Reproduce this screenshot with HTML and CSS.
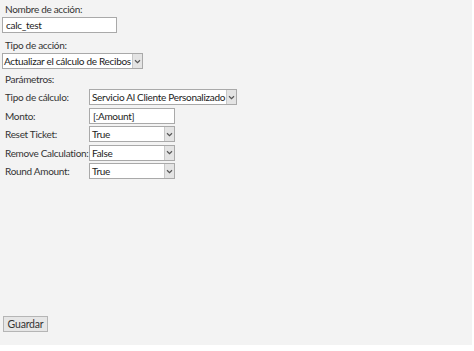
FILE: index.html
```html
<!DOCTYPE html>
<html lang="es">
<head>
<meta charset="utf-8">
<link rel="stylesheet" href="styles.css">
</head>
<body>
<div class="page">
  <form class="form">
    <div class="label top-label">Nombre de acción:</div>
    <div class="textbox name-box">calc_test</div>
    <div class="label">Tipo de acción:</div>
    <div class="select type-select"><span class="sel-text">Actualizar el cálculo de Recibos</span><span class="arrow"><svg width="7" height="5" viewBox="0 0 7 5"><path d="M1 1.2 L3.5 3.6 L6 1.2" fill="none" stroke="#555" stroke-width="1.2"/></svg></span></div>
    <div class="label params">Parámetros:</div>
    <div class="grid">
      <div class="label cell">Tipo de cálculo:</div>
      <div class="select calc-select"><span class="sel-text">Servicio Al Cliente Personalizado</span><span class="arrow"><svg width="7" height="5" viewBox="0 0 7 5"><path d="M1 1.2 L3.5 3.6 L6 1.2" fill="none" stroke="#555" stroke-width="1.2"/></svg></span></div>
      <div class="label cell">Monto:</div>
      <div class="textbox small">[:Amount]</div>
      <div class="label cell">Reset Ticket:</div>
      <div class="select small"><span class="sel-text">True</span><span class="arrow"><svg width="7" height="5" viewBox="0 0 7 5"><path d="M1 1.2 L3.5 3.6 L6 1.2" fill="none" stroke="#555" stroke-width="1.2"/></svg></span></div>
      <div class="label cell">Remove Calculation:</div>
      <div class="select small"><span class="sel-text">False</span><span class="arrow"><svg width="7" height="5" viewBox="0 0 7 5"><path d="M1 1.2 L3.5 3.6 L6 1.2" fill="none" stroke="#555" stroke-width="1.2"/></svg></span></div>
      <div class="label cell">Round Amount:</div>
      <div class="select small"><span class="sel-text">True</span><span class="arrow"><svg width="7" height="5" viewBox="0 0 7 5"><path d="M1 1.2 L3.5 3.6 L6 1.2" fill="none" stroke="#555" stroke-width="1.2"/></svg></span></div>
    </div>
    <div class="spacer"></div>
    <div class="actions"><button type="button" class="btn">Guardar</button></div>
  </form>
</div>
</body>
</html>
```
FILE: styles.css
```css
html, body {
  margin: 0;
  padding: 0;
  background: #ffffff;
}
body {
  font-family: Lato, "Noto Sans", sans-serif;
  font-size: 10px;
  letter-spacing: -0.3px;
  color: #333333;
}
.page {
  width: 472px;
  height: 345px;
  background: #f3f3f3;
  box-sizing: border-box;
  padding: 2px 0 0 2px;
}
.form {
  display: flex;
  flex-direction: column;
  height: 100%;
}
.label {
  padding-left: 3px;
  height: 15px;
  line-height: 15px;
  white-space: nowrap;
}
.textbox, .select {
  box-sizing: border-box;
  height: 16px;
  border: 1px solid #a9a9a9;
  background: #ffffff;
  line-height: 14px;
  white-space: nowrap;
  color: #222;
}
.textbox {
  padding-left: 3px;
}
.name-box {
  width: 115px;
  margin-bottom: 5px;
}
.select {
  display: flex;
  align-items: stretch;
}
.sel-text {
  flex: 1;
  padding-left: 1px;
  overflow: hidden;
}
.arrow {
  width: 9px;
  border-left: 1px solid #c8c8c8;
  background: #e4e4e4;
  display: flex;
  align-items: center;
  justify-content: center;
}
.type-select {
  width: 141px;
  margin-bottom: 3px;
}
.params {
  margin-bottom: 2px;
}
.grid {
  display: grid;
  grid-template-columns: 87px auto;
  row-gap: 2.5px;
  justify-items: start;
  align-items: center;
}
.cell {
  height: 16px;
  line-height: 16px;
}
.calc-select {
  width: 148px;
}
.calc-select .sel-text {
  padding-left: 2px;
}
.small {
  width: 86px;
}
.small .sel-text {
  padding-left: 2px;
}
.spacer {
  flex: 1;
}
.actions {
  margin: 0 0 13px 1px;
}
.btn {
  font-family: inherit;
  font-size: 10.5px;
  letter-spacing: -0.2px;
  color: #333;
  height: 16px;
  width: 45px;
  padding: 0;
  border: 1px solid #b5b5b5;
  background: #e6e6e6;
  line-height: 14px;
}
```
